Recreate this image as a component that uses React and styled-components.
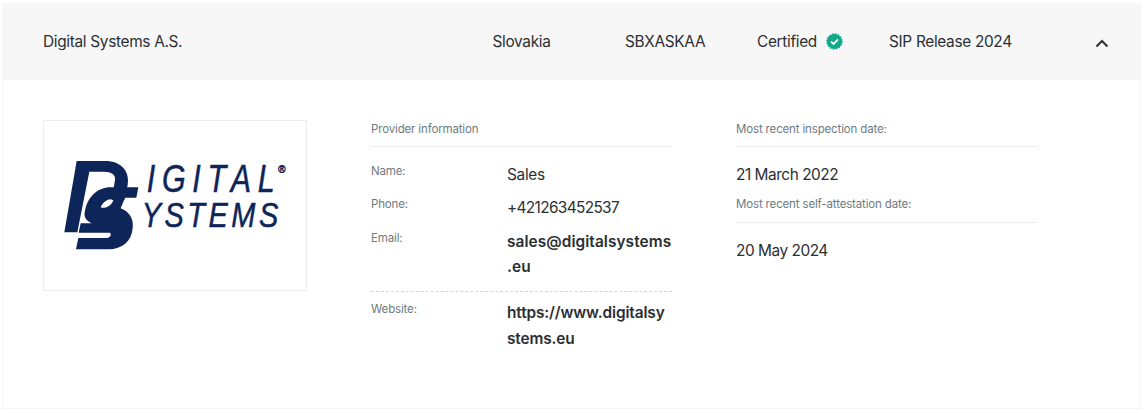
import styled, { createGlobalStyle } from "styled-components";

const GlobalStyle = createGlobalStyle`
  html, body { margin: 0; padding: 0; background: #fff; }
  body { font-family: Inter, "Liberation Sans", sans-serif; color: #2b2f33; }
`;

const Page = styled.div`
  width: 1145px;
  height: 413px;
  padding: 3px 4px 3px 2px;
  box-sizing: border-box;
  overflow: hidden;
`;

const Card = styled.section`
  border: 1px solid #f4f4f4;
  border-top: 0;
  border-left-color: #f7f7f7;
  height: 406px;
  box-sizing: border-box;
`;

const Header = styled.header`
  height: 77px;
  background: #f7f7f7;
  display: grid;
  grid-template-columns: 449.5px 132.5px 132px 132px 206px 1fr;
  align-items: center;
  padding-left: 40px;
  font-size: 15.4px;
  letter-spacing: -0.32px;
`;

const Certified = styled.span`
  display: flex;
  align-items: center;
  gap: 9px;
`;

const Chevron = styled.svg`
  width: 14px;
  height: 9px;
  margin-top: 3px;
`;

const Body = styled.div`
  display: flex;
  padding: 40px 0 0 40px;
`;

const LogoBox = styled.div`
  width: 264px;
  height: 171px;
  box-sizing: border-box;
  border: 1px solid #ececec;
  flex: none;
`;

const Column = styled.div`
  width: 301px;
  margin-left: ${(p) => p.$gap}px;
`;

const Caption = styled.div`
  font-size: 11.5px;
  letter-spacing: -0.15px;
  line-height: 16px;
  color: #6f7a80;
  padding: 1px 0 ${(p) => p.$bottom}px;
  border-bottom: 1px solid #ececec;
`;

const InfoRow = styled.div`
  display: grid;
  grid-template-columns: 136px 1fr;
  padding-top: ${(p) => p.$top}px;
  border-top: ${(p) => (p.$dashed ? "1px dashed #d4d4d4" : "0")};
`;

const Label = styled.div`
  font-size: 11.5px;
  letter-spacing: -0.15px;
  line-height: 16px;
  color: #6f7a80;
  padding-top: 1px;
`;

const Value = styled.div`
  font-size: 15.4px;
  letter-spacing: ${(p) => p.$spacing}px;
  line-height: ${(p) => p.$leading || 26}px;
  font-weight: ${(p) => (p.$bold ? 600 : 400)};
  padding-bottom: ${(p) => p.$bottom || 0}px;
  white-space: nowrap;
`;

const DateValue = styled.div`
  font-size: 15.4px;
  letter-spacing: -0.46px;
  line-height: 26px;
  padding: 15px 0 ${(p) => p.$bottom}px;
`;

const LogoText = styled.text`
  font-family: "Liberation Sans", sans-serif;
  font-style: italic;
  fill: #0d2559;
  stroke: #0d2559;
  stroke-width: 1.5px;
  font-size: ${(p) => p.$size}px;
`;

function Logo() {
  return (
    <svg width="262" height="169" viewBox="42 33 786 507">
      <g fill="#0d2559" fillRule="evenodd">
        <path d="M140 153 H225 C275 153 300 185 293 225 L283 270 L245 270 L255 210 C258 195 245 185 220 185 H178 L142 367 H103 Z" />
        <path d="M240 232 H325 L319 263 H285 L272 295 C297 305 312 325 308 355 C304 395 277 418 235 418 H138 L145 384 H225 C240 384 246 376 240 368 H146 L152 340 H185 C165 330 160 320 166 298 C174 260 205 232 240 232 Z M212 292 C220 272 240 263 250 270 C247 285 226 298 212 292 Z" />
      </g>
      <LogoText $size={114} transform="translate(350 247) scale(.8 1)" textLength="480" lengthAdjust="spacing">IGITAL</LogoText>
      <LogoText $size={106} transform="translate(335 352) scale(.82 1)" textLength="500" lengthAdjust="spacing">YSTEMS</LogoText>
      <LogoText $size={30} x="744" y="188">®</LogoText>
    </svg>
  );
}

export default function App() {
  return (
    <Page>
      <GlobalStyle />
      <Card>
        <Header>
          <span>Digital Systems A.S.</span>
          <span>Slovakia</span>
          <span>SBXASKAA</span>
          <Certified>
            Certified
            <svg width="17" height="17" viewBox="0 0 17 17">
              <circle cx="8.5" cy="8.5" r="7.6" fill="#12a88a" stroke="#12a88a" strokeWidth="1.2" strokeDasharray="1.6 1.4" />
              <path d="M5 8.7 L7.5 11 L12 6.4" fill="none" stroke="#fff" strokeWidth="1.8" />
            </svg>
          </Certified>
          <span>SIP Release 2024</span>
          <Chevron viewBox="0 0 14 9">
            <path d="M1.5 7.5 L7 2 L12.5 7.5" fill="none" stroke="#2b2f33" strokeWidth="2" />
          </Chevron>
        </Header>
        <Body>
          <LogoBox>
            <Logo />
          </LogoBox>
          <Column $gap={64}>
            <Caption $bottom={9}>Provider information</Caption>
            <InfoRow $top={15}>
              <Label>Name:</Label>
              <Value $spacing={-0.32}>Sales</Value>
            </InfoRow>
            <InfoRow $top={7}>
              <Label>Phone:</Label>
              <Value $spacing={-0.65}>+421263452537</Value>
            </InfoRow>
            <InfoRow $top={8}>
              <Label>Email:</Label>
              <Value $bold $spacing={0.08} $leading={25} $bottom={12}>sales@digitalsystems<br />.eu</Value>
            </InfoRow>
            <InfoRow $dashed $top={8}>
              <Label>Website:</Label>
              <Value $bold $spacing={-0.12}>https://www.digitalsy<br />stems.eu</Value>
            </InfoRow>
          </Column>
          <Column $gap={64}>
            <Caption $bottom={9}>Most recent inspection date:</Caption>
            <DateValue $bottom={7}>21 March 2022</DateValue>
            <Caption $bottom={10}>Most recent self-attestation date:</Caption>
            <DateValue $bottom={0}>20 May 2024</DateValue>
          </Column>
        </Body>
      </Card>
    </Page>
  );
}
